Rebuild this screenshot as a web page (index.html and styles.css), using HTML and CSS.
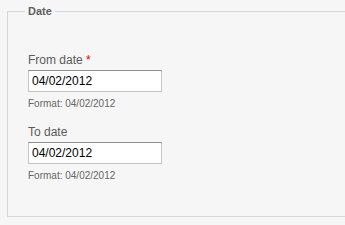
FILE: index.html
```html
<!DOCTYPE html>
<html lang="en">

<head>
    <meta charset="UTF-8">
    <meta name="viewport" content="width=device-width, initial-scale=1.0">
    <title>Date filter</title>
    <link rel="stylesheet" href="styles.css">
</head>

<body>

    <fieldset class="date-group">
        <legend>Date</legend>

        <div class="form-item">
            <label for="from-date">From date <span class="required">*</span></label>
            <input type="text" id="from-date" value="04/02/2012">
            <div class="description">Format: 04/02/2012</div>
        </div>

        <div class="form-item">
            <label for="to-date">To date</label>
            <input type="text" id="to-date" value="04/02/2012">
            <div class="description">Format: 04/02/2012</div>
        </div>
    </fieldset>

</body>

</html>
```

FILE: styles.css
```css
body {
    font-family: 'Liberation Sans', Arial, sans-serif;
    background-color: #f6f6f6;
    margin: 0;
    overflow: hidden;
}

/* right edge is cut off in the panel, so no right border */
.date-group {
    margin: 4px 0 0 7px;
    padding: 35px 20px 34px 20px;
    border: 1px solid #d6d6d6;
    border-right: none;
    background-color: #f6f6f6;
}

legend {
    margin-left: -3px;
    padding: 0 3px;
    font-size: 11px;
    line-height: 14px;
    font-weight: bold;
    color: #5f5f5f;
}

.form-item {
    margin-bottom: 15px;
}

.form-item:last-child {
    margin-bottom: 0;
}

label {
    display: block;
    font-size: 12px;
    line-height: 15px;
    color: #5a5a5a;
    margin-bottom: 2px;
}

.required {
    color: #e00;
}

input {
    display: block;
    box-sizing: border-box;
    width: 134px;
    height: 22px;
    padding: 3px 3px;
    margin: 0;
    border: 1px solid #c4c4c4;
    border-top-color: #8e8e8e;
    border-radius: 0;
    background: #fff;
    font-family: 'Liberation Sans', Arial, sans-serif;
    font-size: 12px;
    color: #000;
}

.description {
    margin-top: 5px;
    font-size: 10px;
    line-height: 13px;
    color: #666;
}
```
